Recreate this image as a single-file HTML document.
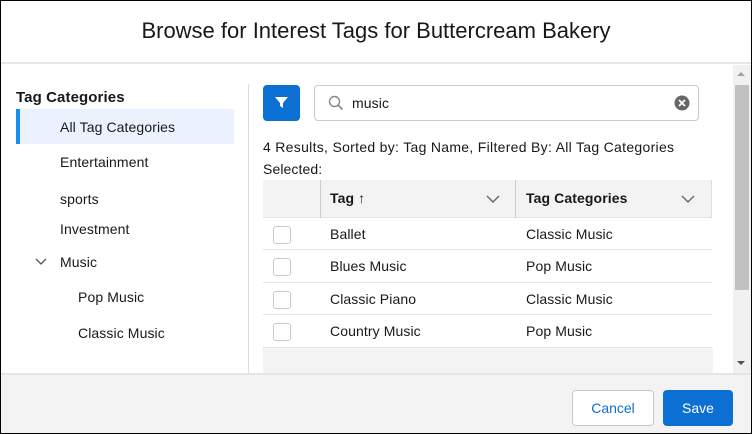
<!DOCTYPE html>
<html><head><style>
*{box-sizing:border-box;margin:0;padding:0}
body{width:752px;height:434px;overflow:hidden;font-family:"Liberation Sans",sans-serif;color:#181818;background:#fff;position:relative}
.frame{position:absolute;left:0;top:0;width:752px;height:434px;border:1px solid #000;pointer-events:none;z-index:10}
.abs{position:absolute}
.t{font-size:14px;white-space:nowrap;letter-spacing:0.1px}
</style></head><body>
<div class="abs" style="left:0;top:0;width:752px;height:64px;border-bottom:2px solid #e5e5e5;"></div>
<div class="abs" style="left:0;top:18px;width:752px;text-align:center;font-size:22px;color:#181818">Browse for Interest Tags for Buttercream Bakery</div>

<div class="abs" style="left:248px;top:84px;width:1px;height:290px;background:#ddd"></div>
<div class="abs t" style="left:16px;top:89px;font-weight:bold;font-size:15px">Tag Categories</div>
<div class="abs" style="left:16px;top:109px;width:218px;height:35px;background:#eaf3fd;border-left:4px solid #1b8cf0"></div>
<div class="abs t" style="left:60px;top:119px">All Tag Categories</div>
<div class="abs t" style="left:60px;top:154px">Entertainment</div>
<div class="abs t" style="left:60px;top:191px">sports</div>
<div class="abs t" style="left:60px;top:221px">Investment</div>
<svg class="abs" style="left:35px;top:257px" width="12" height="10"><path d="M1 2 L6 7 L11 2" fill="none" stroke="#555" stroke-width="1.3"/></svg>
<div class="abs t" style="left:60px;top:254px">Music</div>
<div class="abs t" style="left:78px;top:289px">Pop Music</div>
<div class="abs t" style="left:78px;top:325px">Classic Music</div>

<div class="abs" style="left:263px;top:85px;width:37px;height:36px;background:#0b6fd3;border-radius:4px"></div>
<svg class="abs" style="left:274px;top:95px" width="15" height="15"><path d="M1 2 H14 L9 8 V13 L6 11 V8 Z" fill="#fff"/></svg>
<div class="abs" style="left:314px;top:85px;width:385px;height:36px;border:1px solid #c9c9c9;border-radius:4px"></div>
<svg class="abs" style="left:328px;top:95px" width="16" height="16"><circle cx="6.5" cy="6.5" r="5" fill="none" stroke="#888" stroke-width="1.4"/><path d="M10 10 L14.5 14.5" stroke="#888" stroke-width="1.6"/></svg>
<div class="abs t" style="left:352px;top:95px">music</div>
<svg class="abs" style="left:674px;top:95px" width="16" height="16"><circle cx="8" cy="8" r="7.5" fill="#666"/><path d="M5 5 L11 11 M11 5 L5 11" stroke="#fff" stroke-width="1.8"/></svg>
<div class="abs t" style="left:263px;top:139px;letter-spacing:0.3px">4 Results, Sorted by: Tag Name, Filtered By: All Tag Categories</div>
<div class="abs t" style="left:263px;top:161px">Selected:</div>

<div class="abs" style="left:263px;top:180px;width:449px;height:38px;background:#f3f3f3;border-bottom:1px solid #e5e5e5"></div>
<div class="abs" style="left:320px;top:180px;width:1px;height:38px;background:#ccc"></div>
<div class="abs" style="left:515px;top:180px;width:1px;height:38px;background:#ccc"></div>
<div class="abs" style="left:711px;top:180px;width:1px;height:38px;background:#ddd"></div>
<div class="abs t" style="left:330px;top:190px;font-weight:bold">Tag ↑</div>
<div class="abs t" style="left:526px;top:190px;font-weight:bold">Tag Categories</div>
<svg class="abs" style="left:486px;top:194px" width="14" height="10"><path d="M1 2 L7 8 L13 2" fill="none" stroke="#666" stroke-width="1.4"/></svg>
<svg class="abs" style="left:681px;top:194px" width="14" height="10"><path d="M1 2 L7 8 L13 2" fill="none" stroke="#666" stroke-width="1.4"/></svg>

<div class="abs" style="left:263px;top:218px;width:449px;height:130px">
 <div style="height:32px;border-bottom:1px solid #e5e5e5;position:relative"><div class="abs" style="left:10px;top:8px;width:18px;height:18px;border:1px solid #c9c9c9;border-radius:3px"></div><div class="abs t" style="left:67px;top:8px">Ballet</div><div class="abs t" style="left:263px;top:8px">Classic Music</div></div>
 <div style="height:33px;border-bottom:1px solid #e5e5e5;position:relative"><div class="abs" style="left:10px;top:8px;width:18px;height:18px;border:1px solid #c9c9c9;border-radius:3px"></div><div class="abs t" style="left:67px;top:8px">Blues Music</div><div class="abs t" style="left:263px;top:8px">Pop Music</div></div>
 <div style="height:32px;border-bottom:1px solid #e5e5e5;position:relative"><div class="abs" style="left:10px;top:8px;width:18px;height:18px;border:1px solid #c9c9c9;border-radius:3px"></div><div class="abs t" style="left:67px;top:8px">Classic Piano</div><div class="abs t" style="left:263px;top:8px">Classic Music</div></div>
 <div style="height:33px;border-bottom:1px solid #e5e5e5;position:relative"><div class="abs" style="left:10px;top:8px;width:18px;height:18px;border:1px solid #c9c9c9;border-radius:3px"></div><div class="abs t" style="left:67px;top:8px">Country Music</div><div class="abs t" style="left:263px;top:8px">Pop Music</div></div>
</div>
<div class="abs" style="left:263px;top:348px;width:450px;height:26px;background:#f3f3f3"></div>

<div class="abs" style="left:733px;top:65px;width:18px;height:309px;background:#f1f1f1"></div>
<div class="abs" style="left:735px;top:85px;width:14px;height:205px;background:#c1c1c1"></div>
<svg class="abs" style="left:736px;top:70px" width="10" height="8"><path d="M1 6 L5 2 L9 6Z" fill="#a3a3a3"/></svg>
<svg class="abs" style="left:736px;top:359px" width="10" height="8"><path d="M1 2 L5 6 L9 2Z" fill="#505050"/></svg>

<div class="abs" style="left:0;top:373px;width:752px;height:61px;background:#f3f3f3;border-top:2px solid #e5e5e5"></div>
<div class="abs" style="left:572px;top:390px;width:82px;height:36px;background:#fff;border:1px solid #c9c9c9;border-radius:4px;color:#0b6fd3;font-size:14px;text-align:center;line-height:34px">Cancel</div>
<div class="abs" style="left:663px;top:390px;width:70px;height:36px;background:#0b6fd3;border-radius:4px;color:#fff;font-size:14px;text-align:center;line-height:36px">Save</div>
<div class="frame"></div>
</body></html>
